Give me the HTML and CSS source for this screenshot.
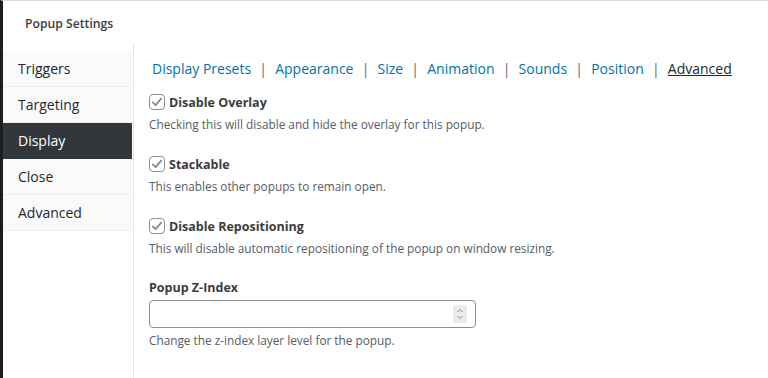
FILE: index.html
```html
<!DOCTYPE html>
<html>
<head>
<meta charset="utf-8">
<link rel="stylesheet" href="styles.css">
</head>
<body>
<div class="frame">
  <div class="header">Popup Settings</div>
  <div class="body">
    <ul class="tabs">
      <li class="tab">Triggers</li>
      <li class="tab">Targeting</li>
      <li class="tab active">Display</li>
      <li class="tab">Close</li>
      <li class="tab">Advanced</li>
    </ul>
    <div class="content">
      <nav class="subtabs">
        <a class="sub">Display Presets</a><span class="sep">|</span>
        <a class="sub">Appearance</a><span class="sep">|</span>
        <a class="sub">Size</a><span class="sep">|</span>
        <a class="sub">Animation</a><span class="sep">|</span>
        <a class="sub">Sounds</a><span class="sep">|</span>
        <a class="sub">Position</a><span class="sep">|</span>
        <a class="sub current">Advanced</a>
      </nav>
      <div class="field">
        <label class="check"><span class="box"><svg viewBox="0 0 16 16" width="16" height="16"><path d="M3.8 8.4 L6.6 11.2 L12.2 4.6" fill="none" stroke="#8a8a8a" stroke-width="1.8" stroke-linecap="round" stroke-linejoin="round"/></svg></span><span class="label">Disable Overlay</span></label>
        <p class="desc">Checking this will disable and hide the overlay for this popup.</p>
      </div>
      <div class="field">
        <label class="check"><span class="box"><svg viewBox="0 0 16 16" width="16" height="16"><path d="M3.8 8.4 L6.6 11.2 L12.2 4.6" fill="none" stroke="#8a8a8a" stroke-width="1.8" stroke-linecap="round" stroke-linejoin="round"/></svg></span><span class="label">Stackable</span></label>
        <p class="desc">This enables other popups to remain open.</p>
      </div>
      <div class="field">
        <label class="check"><span class="box"><svg viewBox="0 0 16 16" width="16" height="16"><path d="M3.8 8.4 L6.6 11.2 L12.2 4.6" fill="none" stroke="#8a8a8a" stroke-width="1.8" stroke-linecap="round" stroke-linejoin="round"/></svg></span><span class="label">Disable Repositioning</span></label>
        <p class="desc">This will disable automatic repositioning of the popup on window resizing.</p>
      </div>
      <div class="field number">
        <div class="flabel">Popup Z-Index</div>
        <div class="input"><span class="spin"><svg viewBox="0 0 14 18" width="14" height="18"><path d="M4.5 7 L7 4.5 L9.5 7 M4.5 11 L7 13.5 L9.5 11" fill="none" stroke="#8a8a8a" stroke-width="1"/></svg></span></div>
        <p class="desc">Change the z-index layer level for the popup.</p>
      </div>
    </div>
  </div>
</div>
</body>
</html>
```

FILE: styles.css
```css
* { box-sizing: border-box; }
html, body { margin: 0; padding: 0; background: #fff; }
body {
  font-family: "Open Sans", "Noto Sans", sans-serif;
  color: #23282d;
  width: 768px;
  height: 378px;
  overflow: hidden;
}
.frame {
  height: 378px;
  border-left: 3px solid #1d1d1d;
  border-top: 1px solid #dcdcdc;
  display: flex;
  flex-direction: column;
}
.header {
  height: 42px;
  padding: 14px 0 0 22px;
  font-size: 12.2px;
  font-weight: 600;
  color: #3c3c3c;
  line-height: 18px;
}
.body {
  flex: 1;
  display: flex;
}
.tabs {
  list-style: none;
  margin: 8px 0 0 0;
  padding: 0;
  width: 129px;
  align-self: flex-start;
  background: #fafafa;
}
.tab {
  height: 36px;
  line-height: 36px;
  padding-left: 15px;
  font-size: 14px;
  color: #23282d;
  border-bottom: 1px solid #eeeeee;
}
.tab.active {
  background: #32373c;
  color: #fff;
  border-bottom-color: #32373c;
}
.content {
  flex: 1;
  margin-left: 1px;
  border-left: 1px solid #e5e5e5;
  padding: 15px 0 0 15px;
}
.subtabs {
  display: flex;
  align-items: center;
  font-size: 14px;
  line-height: 22px;
  padding-left: 3px;
}
.sub { color: #0073aa; }
.sub.current { color: #23282d; text-decoration: underline; }
.sep { color: #666; margin: 0 8.2px; }
.field { margin-top: 11px; }
.field + .field { margin-top: 21px; }
.check {
  display: flex;
  align-items: center;
  height: 22px;
}
.box {
  width: 16px;
  height: 16px;
  border: 1px solid #8c8f94;
  border-radius: 4px;
  display: flex;
  align-items: center;
  justify-content: center;
  margin-right: 4px;
  background: #fff;
}
.box svg { display: block; margin: -1px; }
.label {
  font-size: 12.5px;
  font-weight: 700;
  color: #3c3c3c;
}
.desc {
  margin: 3px 0 0 0;
  font-size: 11.8px;
  line-height: 16px;
  color: #555d66;
}
.field.number { margin-top: 23px; }
.flabel {
  font-size: 12.5px;
  font-weight: 700;
  color: #3c3c3c;
  line-height: 18px;
}
.input {
  margin-top: 3px;
  width: 327px;
  height: 28px;
  border: 1px solid #8c8f94;
  border-radius: 4px;
  display: flex;
  align-items: center;
  justify-content: flex-end;
  padding-right: 8px;
}
.spin {
  width: 14px;
  height: 18px;
  background: #ececec;
  display: flex;
}
.number .desc { margin-top: 4px; }
```
